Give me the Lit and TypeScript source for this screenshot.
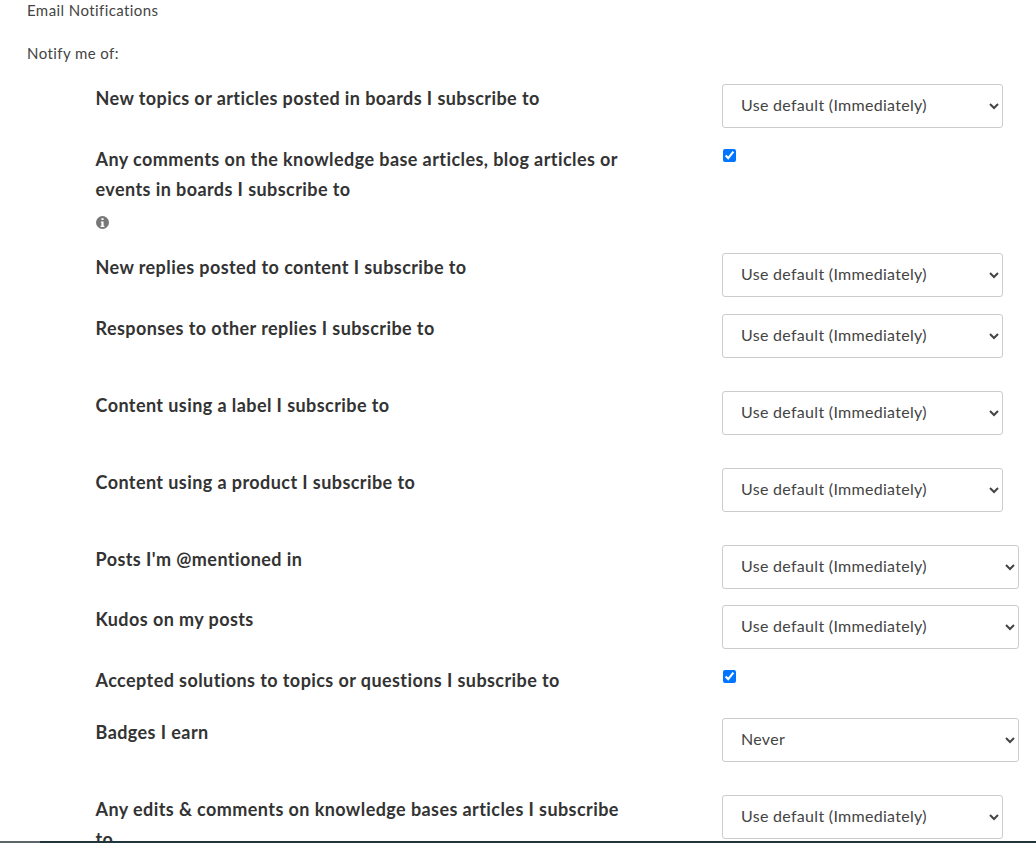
import { LitElement, html, css, nothing } from "lit";
import { customElement } from "lit/decorators.js";

type Row = {
  label: string;
  value?: string;
  wide?: boolean;
  check?: boolean;
  info?: boolean;
  gap: "s" | "m" | "l" | "c";
};

const DEF = "Use default (Immediately)";
const rows: Row[] = [
  { label: "New topics or articles posted in boards I subscribe to", value: DEF, gap: "m" },
  { label: "Any comments on the knowledge base articles, blog articles or events in boards I subscribe to", check: true, info: true, gap: "s" },
  { label: "New replies posted to content I subscribe to", value: DEF, gap: "m" },
  { label: "Responses to other replies I subscribe to", value: DEF, gap: "l" },
  { label: "Content using a label I subscribe to", value: DEF, gap: "l" },
  { label: "Content using a product I subscribe to", value: DEF, gap: "l" },
  { label: "Posts I'm @mentioned in", value: DEF, wide: true, gap: "s" },
  { label: "Kudos on my posts", value: DEF, wide: true, gap: "m" },
  { label: "Accepted solutions to topics or questions I subscribe to", check: true, gap: "c" },
  { label: "Badges I earn", value: "Never", wide: true, gap: "l" },
  { label: "Any edits & comments on knowledge bases articles I subscribe to", value: DEF, gap: "l" },
];

@customElement("app-root")
export class AppRoot extends LitElement {
  static styles = css`
    :host {
      display: block;
      position: relative;
      height: 843px;
      overflow: hidden;
      background: #fff;
      color: #333;
      font-family: "Lato", "Liberation Sans", sans-serif;
      font-size: 15px;
    }
    .head { padding: 0 0 0 27px; letter-spacing: 0.42px; color: #444; }
    .title { line-height: 21px; }
    .notify { line-height: 21px; margin-top: 22px; }
    .list { padding: 20px 0 0 96px; }
    .row {
      display: grid;
      grid-template-columns: 535px 1fr;
      column-gap: 91px;
      align-items: start;
    }
    .row.s { padding-bottom: 16px; }
    .row.m { padding-bottom: 17px; }
    .row.l { padding-bottom: 33px; }
    .row.c { padding-bottom: 23px; }
    .label {
      font-size: 18px;
      font-weight: 700;
      line-height: 30px;
      margin-top: -1px;
      margin-left: -0.5px;
      letter-spacing: 0.42px;
    }
    .info {
      display: block;
      width: 13px;
      height: 13px;
      margin-top: 12px;
      margin-bottom: 8px;
      margin-left: -0.5px;
      fill: #777;
    }
    select {
      display: block;
      width: 281px;
      height: 44px;
      box-sizing: border-box;
      padding: 0 0 4px 14px;
      border: 1px solid #ccc;
      border-radius: 3px;
      background: #fff;
      color: #444;
      font: inherit;
      font-size: 16px;
      letter-spacing: 0.3px;
    }
    select.wide { width: 297px; }
    input {
      display: block;
      width: 13px;
      height: 13px;
      margin: 4px 0 0 1px;
    }
    .bar {
      position: absolute;
      left: 0;
      right: 0;
      bottom: 0;
      height: 2px;
      display: flex;
      background: #22343c;
    }
    .bar span { width: 40px; background: #5c666b; }
  `;

  private renderRow(r: Row) {
    return html`<div class="row ${r.gap}">
      <div>
        <div class="label">${r.label}</div>
        ${r.info
          ? html`<svg class="info" viewBox="0 0 24 24" aria-hidden="true">
              <path fill-rule="evenodd" d="M12 0a12 12 0 1 0 0 24a12 12 0 0 0 0-24zM10 4h4v3.500h-4zM9 10h5v8h1.500v2.500h-7V18H10v-5.500H9z"></path>
            </svg>`
          : nothing}
      </div>
      ${r.check
        ? html`<input type="checkbox" checked />`
        : html`<select class=${r.wide ? "wide" : ""}><option>${r.value}</option></select>`}
    </div>`;
  }

  render() {
    return html`
      <div class="head">
        <div class="title">Email Notifications</div>
        <div class="notify">Notify me of:</div>
      </div>
      <div class="list">${rows.map((r) => this.renderRow(r))}</div>
      <div class="bar"><span></span></div>
    `;
  }
}
